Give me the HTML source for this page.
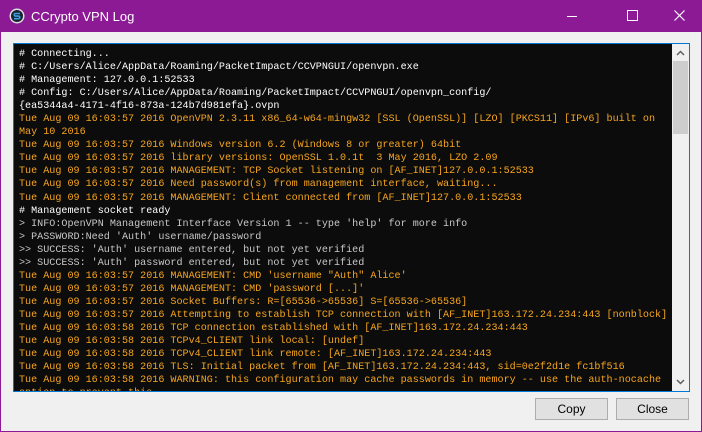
<!DOCTYPE html>
<html><head><style>
body{margin:0;width:702px;height:432px;overflow:hidden;font-family:"Liberation Sans",sans-serif;}
.win{position:absolute;left:0;top:0;width:700px;height:430px;border:1px solid #8b1a94;background:#f0f0f0;}
.tb{position:absolute;left:0;top:0;width:700px;height:31px;background:#8b1a94;color:#fff;}
.tb .t{position:absolute;left:30px;top:8px;font-size:13px;}
.log{position:absolute;left:12px;top:42px;width:675px;height:347px;border:1px solid #0078d7;background:#0c0c0c;overflow:hidden;}
.txt{position:absolute;left:5px;top:4px;font-family:"Liberation Mono",monospace;font-size:10.1px;line-height:13.04px;white-space:pre;}
.w{color:#fff}.o{color:#f7a51e}.g{color:#c8c8c8}
.sb{position:absolute;right:0;top:0;width:17px;height:347px;background:#f0f0f0;}
.th{position:absolute;left:1px;top:17px;width:15px;height:73px;background:#cdcdcd;}
.btn{position:absolute;top:397px;width:71px;height:20px;border:1px solid #adadad;background:#e1e1e1;font-size:12px;text-align:center;line-height:20px;color:#000;}
</style></head><body>
<div class="win">
<div class="tb">
<svg style="position:absolute;left:8px;top:7px" width="16" height="16" viewBox="0 0 16 16"><circle cx="8" cy="8" r="7.5" fill="#ddd"/><circle cx="8" cy="8" r="6" fill="#1a2230"/><path d="M11 5.5H6.5a1.3 1.3 0 0 0 0 2.6h3a1.3 1.3 0 0 1 0 2.6H5" stroke="#3aa0e0" stroke-width="1.6" fill="none"/></svg>
<div class="t">CCrypto VPN Log</div>
<div style="position:absolute;left:566px;top:15px;width:10px;height:1px;background:#fff"></div>
<div style="position:absolute;left:626px;top:9px;width:9px;height:9px;border:1px solid #fff"></div>
<svg style="position:absolute;left:673px;top:9px" width="11" height="11"><path d="M0.5 0.5L10.5 10.5M10.5 0.5L0.5 10.5" stroke="#fff" stroke-width="1.2"/></svg>
</div>
<div class="log"><div class="txt"><span class="w"># Connecting...
# C:/Users/Alice/AppData/Roaming/PacketImpact/CCVPNGUI/openvpn.exe
# Management: 127.0.0.1:52533
# Config: C:/Users/Alice/AppData/Roaming/PacketImpact/CCVPNGUI/openvpn_config/
{ea5344a4-4171-4f16-873a-124b7d981efa}.ovpn</span>
<span class="o">Tue Aug 09 16:03:57 2016 OpenVPN 2.3.11 x86_64-w64-mingw32 [SSL (OpenSSL)] [LZO] [PKCS11] [IPv6] built on
May 10 2016
Tue Aug 09 16:03:57 2016 Windows version 6.2 (Windows 8 or greater) 64bit
Tue Aug 09 16:03:57 2016 library versions: OpenSSL 1.0.1t  3 May 2016, LZO 2.09
Tue Aug 09 16:03:57 2016 MANAGEMENT: TCP Socket listening on [AF_INET]127.0.0.1:52533
Tue Aug 09 16:03:57 2016 Need password(s) from management interface, waiting...
Tue Aug 09 16:03:57 2016 MANAGEMENT: Client connected from [AF_INET]127.0.0.1:52533</span>
<span class="w"># Management socket ready</span>
<span class="g">&gt; INFO:OpenVPN Management Interface Version 1 -- type 'help' for more info
&gt; PASSWORD:Need 'Auth' username/password
&gt;&gt; SUCCESS: 'Auth' username entered, but not yet verified
&gt;&gt; SUCCESS: 'Auth' password entered, but not yet verified</span>
<span class="o">Tue Aug 09 16:03:57 2016 MANAGEMENT: CMD 'username "Auth" Alice'
Tue Aug 09 16:03:57 2016 MANAGEMENT: CMD 'password [...]'
Tue Aug 09 16:03:57 2016 Socket Buffers: R=[65536-&gt;65536] S=[65536-&gt;65536]
Tue Aug 09 16:03:57 2016 Attempting to establish TCP connection with [AF_INET]163.172.24.234:443 [nonblock]
Tue Aug 09 16:03:58 2016 TCP connection established with [AF_INET]163.172.24.234:443
Tue Aug 09 16:03:58 2016 TCPv4_CLIENT link local: [undef]
Tue Aug 09 16:03:58 2016 TCPv4_CLIENT link remote: [AF_INET]163.172.24.234:443
Tue Aug 09 16:03:58 2016 TLS: Initial packet from [AF_INET]163.172.24.234:443, sid=0e2f2d1e fc1bf516
Tue Aug 09 16:03:58 2016 WARNING: this configuration may cache passwords in memory -- use the auth-nocache
option to prevent this</span></div>
<div class="sb"><div class="th"></div>
<svg style="position:absolute;left:4px;top:6px" width="9" height="6"><path d="M1 5L4.5 1.5L8 5" stroke="#606060" stroke-width="1.5" fill="none"/></svg>
<svg style="position:absolute;left:4px;top:335px" width="9" height="6"><path d="M1 1L4.5 4.5L8 1" stroke="#606060" stroke-width="1.5" fill="none"/></svg>
</div></div>
<div class="btn" style="left:534px">Copy</div>
<div class="btn" style="left:615px">Close</div>
</div>
</body></html>
